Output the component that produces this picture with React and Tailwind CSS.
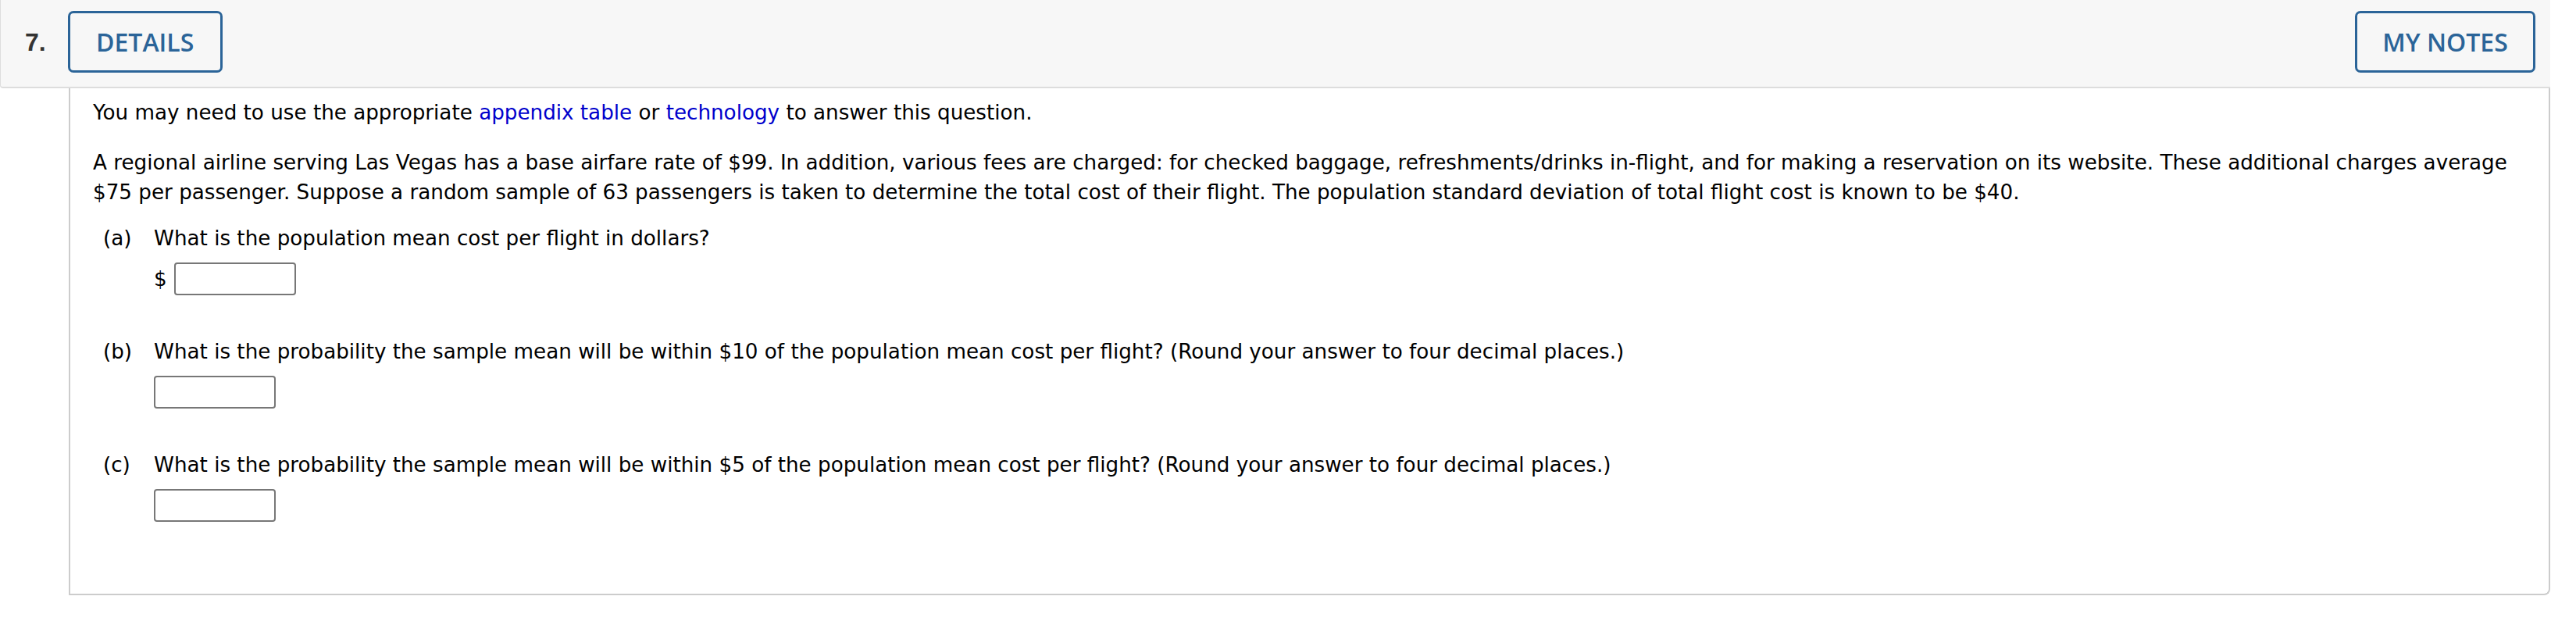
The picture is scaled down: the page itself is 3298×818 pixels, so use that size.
import React from "react";

function AnswerBox({ prefix }) {
  return (
    <div className="flex items-center gap-[9px]">
      {prefix && <span>{prefix}</span>}
      <input
        type="text"
        className="h-[42px] w-[156px] rounded-[4px] border-2 border-[#777] bg-white outline-none"
      />
    </div>
  );
}

function Part({ label, question, children }) {
  return (
    <div className="flex pl-[13px]">
      <div className="w-[65px] shrink-0">{label}</div>
      <div className="flex flex-col gap-[12px]">
        <p>{question}</p>
        {children}
      </div>
    </div>
  );
}

export default function App() {
  return (
    <div className="min-h-screen w-full bg-white pr-[33px]">
      {/* question header */}
      <div className="flex items-start justify-between rounded-bl-[4px] border-b-2 border-l border-[#ddd] bg-[#f7f7f7] pb-[18px] pl-[31px] pr-[19px] pt-[14px]">
        <div className="flex items-center gap-[28px]">
          <span className="font-['Liberation_Sans',Arial,sans-serif] text-[32px] font-bold text-[#333]">
            7.
          </span>
          <button className="flex h-[79px] w-[198px] items-center justify-center rounded-[7px] border-[3px] border-[#2b6498] font-['Open_Sans',sans-serif] text-[32px] font-semibold text-[#2b6498]">
            DETAILS
          </button>
        </div>
        <button className="flex h-[79px] w-[231px] items-center justify-center rounded-[7px] border-[3px] border-[#2b6498] font-['Open_Sans',sans-serif] text-[32px] font-semibold text-[#2b6498]">
          MY NOTES
        </button>
      </div>

      {/* question body */}
      <div className="ml-[88px] rounded-br-[8px] border-b-2 border-l-2 border-r-2 border-[#ccc] pb-[92px] pl-[29px] pr-[30px] pt-[12px] font-['DejaVu_Sans',Verdana,sans-serif] text-[26.2px] leading-[38px] text-black">
        <p>
          You may need to use the appropriate{" "}
          <a className="text-[#0000cc]">appendix table</a> or{" "}
          <a className="text-[#0000cc]">technology</a> to answer this question.
        </p>
        <p className="mt-[26px]">
          A regional airline serving Las Vegas has a base airfare rate of $99. In
          addition, various fees are charged: for checked baggage,
          refreshments/drinks in-flight, and for making a reservation on its
          website. These additional charges average $75 per passenger. Suppose a
          random sample of 63 passengers is taken to determine the total cost of
          their flight. The population standard deviation of total flight cost is
          known to be $40.
        </p>

        <div className="mt-[21px] flex flex-col gap-[53px]">
          <Part label="(a)" question="What is the population mean cost per flight in dollars?">
            <AnswerBox prefix="$" />
          </Part>
          <Part
            label="(b)"
            question="What is the probability the sample mean will be within $10 of the population mean cost per flight? (Round your answer to four decimal places.)"
          >
            <AnswerBox />
          </Part>
          <Part
            label="(c)"
            question="What is the probability the sample mean will be within $5 of the population mean cost per flight? (Round your answer to four decimal places.)"
          >
            <AnswerBox />
          </Part>
        </div>
      </div>
    </div>
  );
}
